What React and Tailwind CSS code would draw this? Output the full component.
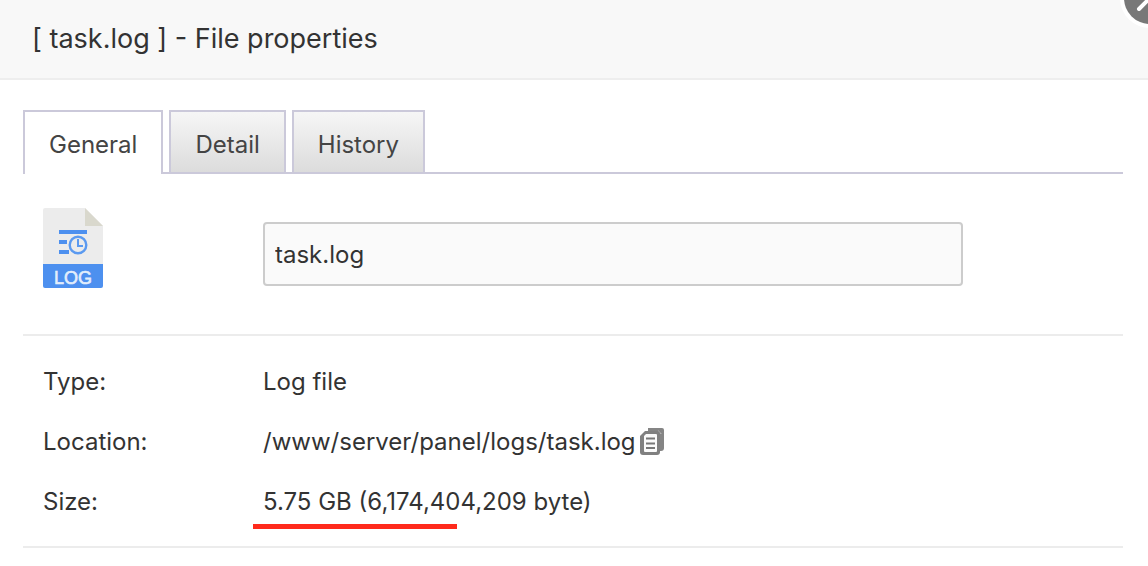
import { useState } from "react";

const tabs = ["General", "Detail", "History"];

function LogFileIcon() {
  return (
    <svg className="h-20 w-15" viewBox="0 0 60 80" role="img" aria-label="Log file">
      <path d="M2 0H42L60 18V56H0V2Q0 0 2 0Z" fill="#ececec" />
      <path d="M42 0L60 18H42Z" fill="#d9d8cd" />
      <path d="M0 56H60V78Q60 80 58 80H2Q0 80 0 78Z" fill="#4d90ef" />
      <path d="M16 24H44M16 34H24M16 44H26" stroke="#4d90ef" strokeWidth="4" fill="none" />
      <circle cx="35" cy="37" r="8.3" fill="none" stroke="#5b9af0" strokeWidth="2.4" />
      <path d="M35 31V38H40" fill="none" stroke="#5b9af0" strokeWidth="2" />
      <text
        x="30"
        y="76"
        textAnchor="middle"
        fontSize="18"
        fill="#e3eefc"
        stroke="#e3eefc"
        strokeWidth="0.6"
        className="font-['Liberation_Sans',sans-serif]"
      >
        LOG
      </text>
    </svg>
  );
}

function CopyIcon() {
  return (
    <svg className="h-7 w-6" viewBox="0 0 24 28" aria-hidden="true">
      <path d="M8 0H22Q24 0 24 2V20Q24 23 21 23H8Z" fill="#858585" />
      <path d="M18 2L22 6H18Z" fill="#b0b0b0" />
      <path d="M5 3H17Q20 3 20 6V24Q20 27 17 27H3Q0 27 0 24V8Z" fill="#808080" />
      <path d="M6 6H16Q17 6 17 7V23Q17 24 16 24H5Q4 24 4 23V8Z" fill="#fafafa" />
      <path d="M6 10.500H15M6 15.500H15M6 20H15" stroke="#777" strokeWidth="1.8" />
    </svg>
  );
}

function Row({ label, children }) {
  return (
    <div className="flex h-15 items-center">
      <dt className="w-55 shrink-0">{label}</dt>
      <dd className="flex items-center gap-1">{children}</dd>
    </div>
  );
}

export default function App() {
  const [active, setActive] = useState("General");
  const [name, setName] = useState("task.log");

  return (
    <main className="relative overflow-hidden bg-white font-[Inter,sans-serif] text-2xl text-[#333]">
      <header className="flex h-20 items-center border-b-2 border-[#eee] bg-[#f8f8f8] px-8">
        <h1 className="text-[27px]">[ task.log ] - File properties</h1>
      </header>
      <button type="button" aria-label="Close" className="absolute -top-8 -right-8 size-15">
        <svg viewBox="0 0 60 60" className="size-15" aria-hidden="true">
          <circle cx="30" cy="30" r="30" fill="#fff" />
          <circle cx="30" cy="30" r="26" fill="#787878" />
          <path d="M19 19L41 41M41 19L19 41" stroke="#fff" strokeWidth="4" strokeLinecap="round" />
        </svg>
      </button>

      <div className="pt-7.5 pr-[25px] pl-[23px]">
        <div role="tablist" className="flex h-16 gap-1.5 border-b-2 border-[#cbc9da] text-[#444]">
          {tabs.map((tab) => (
            <button
              key={tab}
              type="button"
              role="tab"
              aria-selected={active === tab}
              onClick={() => setActive(tab)}
              className={
                active === tab
                  ? "-mb-0.5 border-2 border-b-0 border-[#cbc9da] bg-white px-6 pt-1.5 pb-0.5"
                  : "border-2 border-b-0 border-[#cbc9da] bg-linear-to-b from-[#f6f6f6] to-[#dcdcdc] px-6 pt-1.5"
              }
            >
              {tab}
            </button>
          ))}
        </div>

        <section className="flex h-[162px] items-center border-b-2 border-[#ececec] pl-5">
          <div className="w-55 shrink-0 pb-3">
            <LogFileIcon />
          </div>
          <div className="min-w-0 flex-1 pr-40">
            <input
              type="text"
              aria-label="File name"
              value={name}
              onChange={(e) => setName(e.target.value)}
              className="block h-16 w-full rounded border-2 border-[#ccc] bg-[#fafafa] px-2.5 outline-none"
            />
          </div>
        </section>

        <dl className="border-b-2 border-[#ececec] px-5 pt-4 pb-3.5">
          <Row label="Type:">Log file</Row>
          <Row label="Location:">
            <span>/www/server/panel/logs/task.log</span>
            <button type="button" aria-label="Copy path">
              <CopyIcon />
            </button>
          </Row>
          <Row label="Size:">
            <span className="relative">
              5.75 GB (6,174,404,209 byte)
              <span className="absolute top-full -left-2.5 mt-1.5 h-[5px] w-51 bg-[#ff2a1c]" />
            </span>
          </Row>
        </dl>
      </div>
    </main>
  );
}
